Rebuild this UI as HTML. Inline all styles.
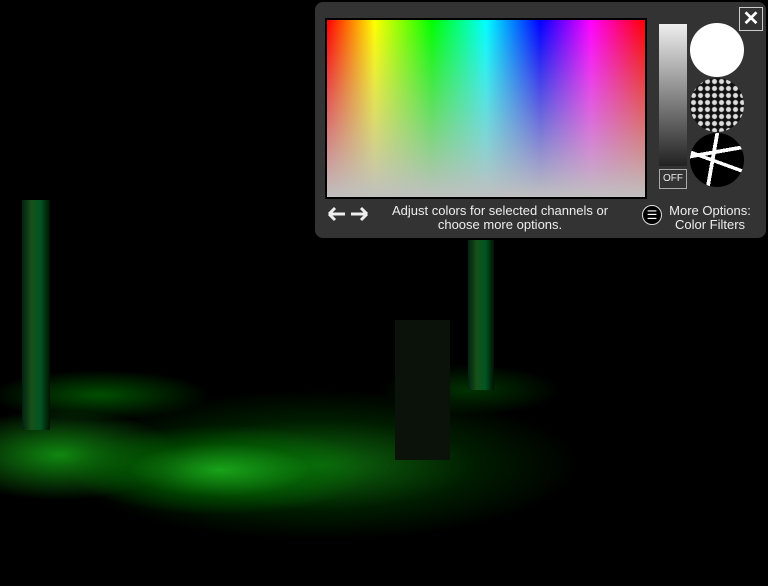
<!DOCTYPE html>
<html><head><style>
body{margin:0;width:768px;height:586px;background:#000;overflow:hidden;position:relative;font-family:"Liberation Sans",sans-serif}
.scene{position:absolute;inset:0;background:
radial-gradient(ellipse 150px 45px at 220px 470px,rgba(30,190,30,.8),rgba(0,110,0,.45) 60%,transparent 100%),
radial-gradient(ellipse 260px 75px at 320px 465px,rgba(20,150,20,.7),rgba(0,80,0,.35) 60%,transparent 100%),
radial-gradient(ellipse 120px 45px at 60px 455px,rgba(20,170,20,.8),transparent 100%),
radial-gradient(ellipse 90px 25px at 470px 390px,rgba(0,100,0,.5),transparent 100%),
radial-gradient(ellipse 110px 25px at 100px 395px,rgba(0,130,0,.6),transparent 100%),
#000}
.col{position:absolute;background:linear-gradient(90deg,#021,#185018,#052,#010);}
.panel{position:absolute;left:315px;top:2px;width:451px;height:236px;background:#333;border-radius:8px}
.grad{position:absolute;left:10px;top:16px;width:318px;height:177px;border:2px solid #000;
background:linear-gradient(180deg,rgba(192,192,192,0),#c0c0c0),linear-gradient(90deg,#f00,#ff0 15%,#0f0 33%,#0ff 50%,#00f 67%,#f0f 83%,#f00)}
.slider{position:absolute;left:344px;top:22px;width:28px;height:142px;background:linear-gradient(#eee,#222)}
.off{position:absolute;left:344px;top:167px;width:26px;height:18px;border:1px solid #aaa;color:#eee;font-size:10px;text-align:center;line-height:18px}
.c{position:absolute;left:375px;width:54px;height:54px;border-radius:50%;background:#000}
.x{position:absolute;left:424px;top:5px;width:22px;height:22px;border:1px solid #ccc;color:#fff;font-size:20px;font-weight:bold;text-align:center;line-height:22px}
.t{position:absolute;color:#eee;font-size:13px;text-align:center;line-height:14px}
</style></head><body>
<div class="scene"></div>
<div class="col" style="left:22px;top:200px;width:28px;height:230px"></div>
<div class="col" style="left:468px;top:240px;width:26px;height:150px"></div>
<div style="position:absolute;left:395px;top:320px;width:55px;height:140px;background:#0a120a"></div>
<div class="panel">
<div class="grad"></div>
<div class="slider"></div>
<div class="off">OFF</div>
<div class="c" style="top:21px;background:#fff"></div>
<div class="c" style="top:76px;background:radial-gradient(circle,#ddd 0 2px,transparent 3px) 0 0/7px 7px,#111"></div>
<div class="c" style="top:131px;background:linear-gradient(20deg,transparent 45%,#fff 45% 50%,transparent 50%),linear-gradient(100deg,transparent 40%,#fff 40% 46%,transparent 46%),linear-gradient(-10deg,transparent 60%,#fff 60% 66%,transparent 66%),#000"></div>
<div class="x">✕</div>
<svg style="position:absolute;left:12px;top:204px" width="42" height="16" viewBox="0 0 42 16">
<path d="M2 8h16M2 8l6-6M2 8l6 6" stroke="#eee" stroke-width="3" fill="none"/>
<path d="M24 8h16M40 8l-6-6M40 8l-6 6" stroke="#eee" stroke-width="3" fill="none"/>
</svg>
<div class="t" style="left:65px;top:202px;width:240px">Adjust colors for selected channels or choose more options.</div>
<div style="position:absolute;left:327px;top:203px;width:18px;height:18px;border:1px solid #ddd;border-radius:50%;background:#000;color:#fff;font-size:12px;text-align:center;line-height:18px">☰</div>
<div class="t" style="left:350px;top:202px;width:90px">More Options: Color Filters</div>
</div>
</body></html>
